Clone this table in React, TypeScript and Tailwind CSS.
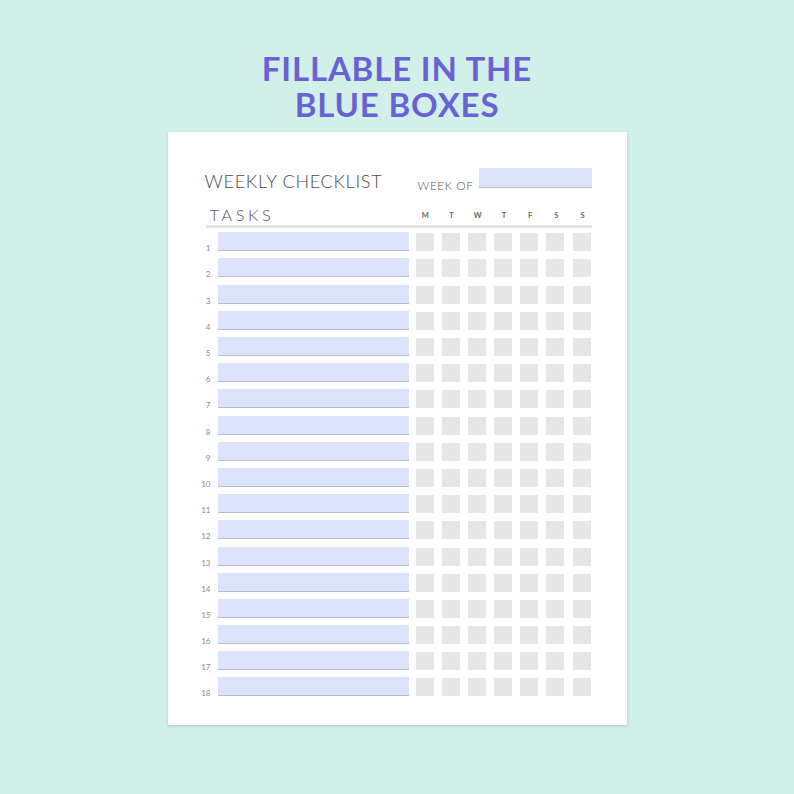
import React from 'react';

const days = ['M', 'T', 'W', 'T', 'F', 'S', 'S'];
const rows = Array.from({ length: 18 }, (_, i) => i + 1);

export default function App() {
  return (
    <div className="w-[794px] h-[794px] bg-[#d1f0ea] flex flex-col items-center font-['Lato',sans-serif]">
      {/* heading */}
      <div className="mt-[50px] text-center text-[#6a62d4] font-bold text-[33px] tracking-[0.025em]">
        <div className="leading-[36px]">FILLABLE IN THE</div>
        <div className="leading-[36px]">BLUE BOXES</div>
      </div>

      {/* sheet */}
      <div className="mt-[10px] w-[459px] h-[593px] bg-white shadow-[0_1px_3px_rgba(0,0,0,0.18)] pl-[32px] pr-[35px] pt-[34px]">
        <div className="flex items-start">
          <div className="ml-[5px] mt-[3px] text-[18px] leading-[24px] font-light tracking-[0.04em] text-[#4d4d4d]">
            WEEKLY CHECKLIST
          </div>
          <div className="ml-auto flex items-start">
            <div className="mt-[12px] text-[11.5px] leading-[15px] font-light tracking-[0.06em] text-[#555]">WEEK OF</div>
            <div className="ml-[5px] mt-[2px] w-[113px] h-[20px] bg-[#dbe2fc] border-b border-[#b7bccd]" />
          </div>
        </div>

        <div className="mt-[12px] flex items-end border-b-[3px] border-[#e3e3e3] ml-[6px]">
          <div className="ml-[4px] text-[16.5px] leading-[20px] font-light tracking-[0.21em] text-[#555]">TASKS</div>
          <div className="ml-auto mb-[4px] flex gap-[8.2px]">
            {days.map((d, i) => (
              <div key={i} className="w-[18px] text-center text-[7.5px] leading-[10px] font-bold text-[#666]">
                {d}
              </div>
            ))}
          </div>
        </div>

        <div className="mt-[4.3px] flex flex-col gap-[7.2px]">
          {rows.map((n) => (
            <div key={n} className="flex h-[19px]">
              <div className="w-[18px] pr-[7px] self-end mb-[-1px] text-right text-[8px] leading-[8px] text-[#888]">
                {n}
              </div>
              <div className="w-[191px] h-[19px] bg-[#dbe2fc] border-b border-[#b7bccd]" />
              <div className="ml-[7px] mt-[1px] flex gap-[8.2px]">
                {days.map((_, i) => (
                  <div key={i} className="w-[18px] h-[18px] bg-[#e6e6e6]" />
                ))}
              </div>
            </div>
          ))}
        </div>
      </div>
    </div>
  );
}
